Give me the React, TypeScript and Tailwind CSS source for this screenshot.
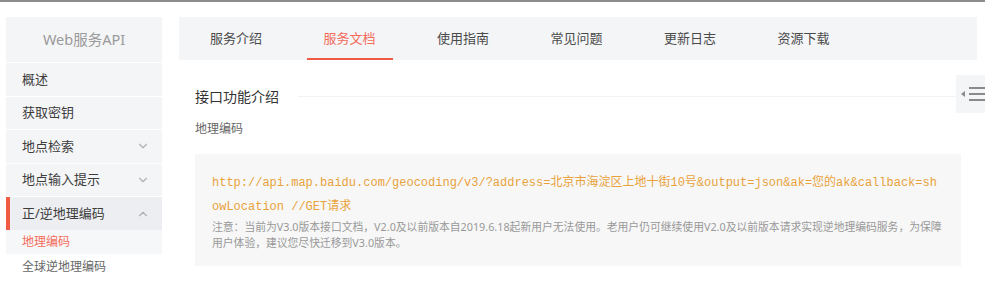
import { ChevronDown, ChevronUp } from 'lucide-react';

const cjk = { fontFamily: '"Noto Sans", "Noto Sans CJK SC", sans-serif' };
const mono = { fontFamily: '"Liberation Mono", "Noto Sans CJK SC", monospace' };

const menu = [
  { label: '概述' },
  { label: '获取密钥' },
  { label: '地点检索', arrow: 'down' },
  { label: '地点输入提示', arrow: 'down' },
  { label: '正/逆地理编码', arrow: 'up', active: true },
];

const tabs = ['服务介绍', '服务文档', '使用指南', '常见问题', '更新日志', '资源下载'];

function Sidebar() {
  return (
    <div className="w-[156px] shrink-0">
      <div className="h-[45px] bg-[#f4f5f7] flex items-center justify-center text-[14.5px] text-[#9a9a9a]">
        Web服务API
      </div>
      {menu.map((m) => (
        <div
          key={m.label}
          className={`relative h-[33.6px] border-t border-white flex items-center justify-between pl-[16px] pr-[12px] text-[13px] text-[#3c3c3c] ${
            m.active ? 'bg-[#eceef1]' : 'bg-[#f4f5f7]'
          }`}
        >
          {m.active && <div className="absolute left-0 top-0 bottom-0 w-[4px] bg-[#f25a43]" />}
          <span>{m.label}</span>
          {m.arrow === 'down' && <ChevronDown className="w-[14px] h-[14px] text-[#b0b0b0]" strokeWidth={2} />}
          {m.arrow === 'up' && <ChevronUp className="w-[14px] h-[14px] text-[#b0b0b0]" strokeWidth={2} />}
        </div>
      ))}
      <div className="h-[24px] bg-[#f6f7f9] flex items-center pl-[16px] text-[12px] text-[#f36c5a]">地理编码</div>
      <div className="h-[26px] flex items-center pl-[16px] text-[12px] text-[#666]">全球逆地理编码</div>
    </div>
  );
}

export default function App() {
  return (
    <div className="relative w-[985px] h-[283px] bg-white overflow-hidden" style={cjk}>
      <div className="h-[2px] bg-[#8c8c8c]" />
      <div className="flex pt-[15px] pl-[6px]">
        <Sidebar />

        <div className="ml-[17px] w-[798px]">
          {/* Tabs */}
          <div className="h-[43px] bg-[#f4f5f7] flex pl-[14px] gap-[27.5px]">
            {tabs.map((t, i) => (
              <div
                key={t}
                className={`relative w-[86px] h-full flex items-center justify-center text-[13px] ${
                  i === 1 ? 'text-[#f36c5a]' : 'text-[#4a4a4a]'
                }`}
              >
                {t}
                {i === 1 && <div className="absolute left-0 right-0 bottom-0 h-[2px] bg-[#f25a43]" />}
              </div>
            ))}
          </div>

          <div className="px-[16px]">
            <div className="mt-[26.5px] flex items-center h-[20px]">
              <span className="text-[14px] text-[#333] leading-[20px]">接口功能介绍</span>
              <div className="flex-1 h-px bg-[#f3f3f3] ml-[19px] mr-[-16px]" />
            </div>
            <div className="mt-[13.5px] text-[12px] leading-[18px] text-[#666]">地理编码</div>

            <div className="mt-[16px] bg-[#f7f7f7] pl-[17px] pr-[10px] pt-[17px] pb-[15px]">
              <div className="text-[12px] leading-[24px] text-[#e9a23b] whitespace-nowrap" style={mono}>
                http://api.map.baidu.com/geocoding/v3/?address=北京市海淀区上地十街10号&amp;output=json&amp;ak=您的ak&amp;callback=sh
                <br />
                owLocation //GET请求
              </div>
              <div className="text-[10.8px] leading-[16px] text-[#999] whitespace-nowrap">
                注意：当前为V3.0版本接口文档，V2.0及以前版本自2019.6.18起新用户无法使用。老用户仍可继续使用V2.0及以前版本请求实现逆地理编码服务，为保障
                <br />
                用户体验，建议您尽快迁移到V3.0版本。
              </div>
            </div>
          </div>
        </div>
      </div>

      {/* floating catalogue button */}
      <div className="absolute left-[956px] top-[75px] w-[40px] h-[38px] bg-[#f4f5f7] flex items-center pl-[5px]">
        <svg width="26" height="18" viewBox="0 0 26 18">
          <path d="M0 9 L4 6 L4 12 Z" fill="#8a8a8a" />
          <rect x="8" y="2" width="18" height="2" fill="#8a8a8a" />
          <rect x="8" y="8" width="18" height="2" fill="#8a8a8a" />
          <rect x="8" y="14" width="18" height="2" fill="#8a8a8a" />
        </svg>
      </div>
    </div>
  );
}
